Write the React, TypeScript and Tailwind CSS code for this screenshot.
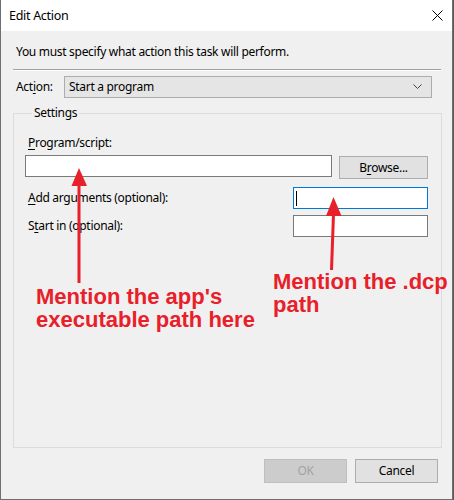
import React from 'react';

const ui = { fontFamily: '"Noto Sans", "Open Sans", sans-serif' };
const note = { fontFamily: '"Liberation Sans", Arial, sans-serif' };

function Field({ focused = false, className = '' }: { focused?: boolean; className?: string }) {
  return (
    <div
      className={`h-[22px] bg-white border flex items-center ${focused ? 'border-[#0078d7]' : 'border-[#7a7a7a]'} ${className}`}
    >
      {focused && <div className="ml-[2px] w-px h-[15px] bg-black" />}
    </div>
  );
}

export default function App() {
  return (
    <div className="w-[454px] h-[500px] bg-[#5a5a5a]">
      <div
        className="relative w-[453px] h-[500px] flex flex-col border-l border-r border-b border-[#6f6f6f] bg-[#f0f0f0] text-[12px] tracking-[-0.3px] text-black leading-[16px]"
        style={ui}
      >
        {/* title bar */}
        <div className="h-[31px] bg-white flex items-center justify-between pl-[8px] pr-[9px] shrink-0">
          <span className="text-[12.5px]">Edit Action</span>
          <svg width="11" height="11" viewBox="0 0 11 11">
            <path d="M0.5 0.5 L10.5 10.5 M10.5 0.5 L0.5 10.5" stroke="#000" strokeWidth="1" />
          </svg>
        </div>

        <div className="flex-1 flex flex-col">
          <div className="pt-[13px] pl-[15px]">You must specify what action this task will perform.</div>

          <div className="mt-[9px] ml-[12px] w-[428px] border-t border-b border-t-[#a0a0a0] border-b-white" />

          {/* action picker */}
          <div className="mt-[5px] flex items-center">
            <span className="pl-[15px] w-[63px]">
              Act<u className="underline-offset-2">i</u>on:
            </span>
            <div className="w-[368px] h-[22px] bg-[#e5e5e5] border border-[#acacac] flex items-center justify-between pl-[4px] pr-[9px]">
              <span>Start a program</span>
              <svg width="9" height="6" viewBox="0 0 9 6">
                <path d="M0.5 0.5 L4.5 4.5 L8.5 0.5" fill="none" stroke="#444" strokeWidth="1" />
              </svg>
            </div>
          </div>

          {/* settings group */}
          <fieldset className="mt-[7px] ml-[12px] w-[429px] h-[343px] border border-[#dcdcdc] pl-[11px] pr-[13px]">
            <legend className="ml-[7px] px-[2px]">Settings</legend>
            <div className="mt-[14px] pl-[3px]">
              <u className="underline-offset-2">P</u>rogram/script:
            </div>
            <div className="mt-[4px] flex items-start gap-[7px]">
              <Field className="w-[307px]" />
              <div className="mt-[1px] w-[89px] h-[23px] bg-[#e1e1e1] border border-[#adadad] flex items-center justify-center">
                <span>
                  B<u className="underline-offset-2">r</u>owse...
                </span>
              </div>
            </div>
            <div className="mt-[8px] flex items-center justify-between">
              <span className="pl-[3px]">
                <u className="underline-offset-2">A</u>dd arguments (optional):
              </span>
              <Field focused className="w-[135px]" />
            </div>
            <div className="mt-[6px] flex items-center justify-between">
              <span className="pl-[3px]">
                S<u className="underline-offset-2">t</u>art in (optional):
              </span>
              <Field className="w-[135px]" />
            </div>
          </fieldset>

          {/* dialog buttons */}
          <div className="mt-[11px] flex justify-end gap-[8px] pr-[14px]">
            <div className="w-[83px] h-[24px] bg-[#cccccc] border border-[#bfbfbf] text-[#a3a3a3] flex items-center justify-center">
              OK
            </div>
            <div className="w-[83px] h-[24px] bg-[#e1e1e1] border border-[#adadad] flex items-center justify-center">
              Cancel
            </div>
          </div>
        </div>

        {/* red callouts drawn on top of the dialog */}
        <svg className="absolute left-0 top-0 pointer-events-none" width="453" height="500">
          <line x1="78" y1="184" x2="78" y2="283" stroke="#e8202a" strokeWidth="3" />
          <polygon points="78,168 70.5,186 86,186" fill="#e8202a" />
          <line x1="332.5" y1="214" x2="330.5" y2="270" stroke="#e8202a" strokeWidth="3" />
          <polygon points="332.5,197 325,216 340.5,216" fill="#e8202a" />
        </svg>
        <div
          className="absolute left-[35px] top-[285px] text-[22px] leading-[23px] tracking-normal font-bold text-[#e8202a]"
          style={note}
        >
          Mention the app's
          <br />
          executable path here
        </div>
        <div
          className="absolute left-[272px] top-[270px] text-[22px] leading-[23px] tracking-normal font-bold text-[#e8202a] whitespace-nowrap"
          style={note}
        >
          Mention the .dcp
          <br />
          path
        </div>
      </div>
    </div>
  );
}
